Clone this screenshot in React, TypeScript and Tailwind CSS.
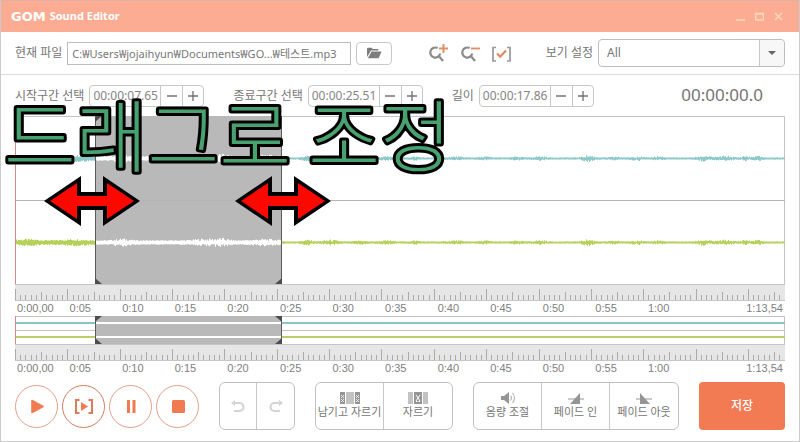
import { useState } from 'react'
import type { ReactNode } from 'react'
import clsx from 'clsx'

const DURATION = 73.54
const WIDTH = 770
const SEL_START = 80
const SEL_END = 267

const MARKS = [
  { label: '0:00,00', span: 5 },
  { label: '0:05', span: 5 },
  { label: '0:10', span: 5 },
  { label: '0:15', span: 5 },
  { label: '0:20', span: 5 },
  { label: '0:25', span: 5 },
  { label: '0:30', span: 5 },
  { label: '0:35', span: 5 },
  { label: '0:40', span: 5 },
  { label: '0:45', span: 5 },
  { label: '0:50', span: 5 },
  { label: '0:55', span: 5 },
  { label: '1:00', span: 13.54 },
]

// loud passages of the track: [center, spread, level]
const BURSTS = [
  [12, 14, 1.2],
  [60, 14, 1.2],
  [107, 9, 1.6],
  [190, 14, 1.4],
  [206, 8, 1.8],
  [250, 14, 1.2],
  [292, 6, 1.6],
  [315, 8, 1.6],
  [345, 6, 1],
  [372, 8, 1],
  [400, 5, 1],
  [440, 8, 1],
  [470, 6, 1],
  [502, 5, 1],
  [525, 7, 1.2],
  [573, 7, 2],
  [600, 6, 0.8],
  [622, 5, 1.6],
  [643, 5, 1.4],
  [689, 7, 1.8],
  [710, 8, 1.5],
  [730, 4, 1.8],
  [742, 5, 1.5],
]

function noise(n: number) {
  const v = Math.sin(n * 12.9898) * 43758.5453
  return v - Math.floor(v)
}

function level(x: number) {
  const base = x < SEL_END ? 2 : 1
  const burst = BURSTS.reduce(
    (sum, [c, w, a]) => sum + a * Math.exp(-(((x - c) / w) ** 2)),
    0
  )
  return base * 0.8 + (base * 0.3 + burst) * noise(x) * 1.2
}

function wavePath(from: number, to: number, y: number) {
  let d = ''
  for (let x = from; x < to; x++) {
    d += `M${x + 0.5} ${(y - level(x)).toFixed(1)}V${(y + level(x + 0.3)).toFixed(1)}`
  }
  return d
}

function Selection({ height }: { height: number }) {
  return (
    <>
      <path
        d={`M${SEL_START + 0.5} 0V${height}M${SEL_END - 0.5} 0V${height}`}
        stroke="#5a5a5a"
      />
      <path
        d={`M${SEL_START} 0h7l-7 6zM${SEL_END} 0h-7l7 6zM${SEL_START} ${height}h7l-7 -6zM${SEL_END} ${height}h-7l7 -6z`}
        fill="#4d4d4d"
      />
    </>
  )
}

function Waveform() {
  return (
    <svg
      viewBox="0 0 770 168"
      preserveAspectRatio="none"
      className="block h-[168px] w-full"
    >
      <path d="M0 .5H769.5V168" fill="none" stroke="#c4c4c4" />
      <rect
        x={SEL_START}
        width={SEL_END - SEL_START}
        height="168"
        fill="#b9b9b9"
      />
      <path d="M0 84.5H770" stroke="#b4b4b4" />
      {[
        { y: 42.5, color: '#8cc9c8' },
        { y: 126.5, color: '#b5d159' },
      ].map(({ y, color }) => (
        <g key={y}>
          <path d={wavePath(0, SEL_START, y)} stroke={color} />
          <path d={wavePath(SEL_START, SEL_END, y)} stroke="#fff" />
          <path d={wavePath(SEL_END, WIDTH, y)} stroke={color} />
        </g>
      ))}
      <Selection height={168} />
      <path d="M.5 0V168" stroke="#d88787" />
    </svg>
  )
}

function Overview() {
  return (
    <svg
      viewBox="0 0 770 28"
      preserveAspectRatio="none"
      className="block h-7 w-full"
    >
      <path d="M0 .5H769.5V28M0 14.5H770" fill="none" stroke="#c4c4c4" />
      <path d="M0 7H770" stroke="#8cc3c8" strokeWidth="2" />
      <path d="M0 21H770" stroke="#bccd6c" strokeWidth="2" />
      <rect
        x={SEL_START}
        width={SEL_END - SEL_START}
        height="28"
        fill="#b9b9b9"
      />
      <path
        d={`M${SEL_START} 7H${SEL_END}M${SEL_START} 21H${SEL_END}`}
        stroke="#fff"
        strokeWidth="2"
      />
      <Selection height={28} />
      <path d="M.5 0V28" stroke="#d88787" />
    </svg>
  )
}

function Ruler() {
  let ticks = ''
  for (let i = 0; i * 0.5 <= DURATION; i++) {
    const x = Math.round((i * 0.5 * WIDTH) / DURATION) + 0.5
    const size = i % 10 === 0 ? 11 : i % 5 === 0 ? 8 : 5
    ticks += `M${x} 16v-${size}`
  }
  return (
    <div>
      <svg
        viewBox="0 0 770 17"
        preserveAspectRatio="none"
        className="block h-[17px] w-full"
      >
        <rect width="770" height="17" fill="#e6e6e6" />
        <path d="M0 .5H770M0 16.5H770" stroke="#c6c6c6" />
        <path d={ticks} stroke="#ababab" />
      </svg>
      <div className="flex font-['Liberation_Sans',sans-serif] text-[11px] leading-[15px] text-[#808080]">
        {MARKS.map(({ label, span }, i) => (
          <span
            key={label}
            className="flex min-w-0 basis-0 justify-between pl-0.5 whitespace-nowrap"
            style={{ flexGrow: span }}
          >
            {label}
            {i === MARKS.length - 1 && <span className="pr-0.5">1:13,54</span>}
          </span>
        ))}
      </div>
    </div>
  )
}

function TimeField({
  id,
  label,
  value,
}: {
  id: string
  label: string
  value: string
}) {
  return (
    <div className="flex items-center gap-[5px]">
      <label htmlFor={id} className="whitespace-nowrap">
        {label}
      </label>
      <div className="flex h-[22px] overflow-hidden rounded border border-[#c8c8c8]">
        <input
          id={id}
          defaultValue={value}
          className="w-[70px] pl-[3px] text-xs text-[#858585] outline-none"
        />
        <button
          aria-label={`${label} -`}
          className="flex w-[22px] items-center justify-center border-l border-[#c8c8c8]"
        >
          <Sign />
        </button>
        <button
          aria-label={`${label} +`}
          className="flex w-[21px] items-center justify-center border-l border-[#c8c8c8]"
        >
          <Sign plus />
        </button>
      </div>
    </div>
  )
}

function Sign({ plus }: { plus?: boolean }) {
  return (
    <svg viewBox="0 0 10 10" className="size-[10px]">
      <path
        d={plus ? 'M0 5H10M5 0V10' : 'M0 5H10'}
        stroke="#757575"
        strokeWidth="1.4"
      />
    </svg>
  )
}

function Magnifier({ plus }: { plus?: boolean }) {
  return (
    <svg viewBox="0 0 20 20" fill="none" className="size-5">
      <path
        d="M9.6 5.1A5 5 0 1 0 12.2 10.5M10.8 13L15 18"
        stroke="#8c8c8c"
        strokeWidth="2.2"
      />
      <path
        d={plus ? 'M11 5.5H20M15.5 1V10' : 'M11 5.5H20'}
        stroke="#e08d68"
        strokeWidth="1.9"
      />
    </svg>
  )
}

function RoundButton({
  label,
  strong,
  children,
}: {
  label: string
  strong?: boolean
  children: ReactNode
}) {
  return (
    <button
      aria-label={label}
      className={clsx(
        'flex size-[43px] shrink-0 items-center justify-center rounded-full border',
        strong ? 'border-[#cf7c5e]' : 'border-[#e3a08a]'
      )}
    >
      <svg viewBox="0 0 20 20" className="size-5" fill="#f07b53">
        {children}
      </svg>
    </button>
  )
}

function ToolGroup({ children }: { children: ReactNode }) {
  return (
    <div className="flex h-12 divide-x divide-[#c8c8c8] overflow-hidden rounded-md border border-[#c0c0c0]">
      {children}
    </div>
  )
}

function ToolButton({
  label,
  children,
}: {
  label: string
  children: ReactNode
}) {
  return (
    <button className="flex w-[68px] flex-col items-center justify-center text-[11px] leading-4 whitespace-nowrap">
      <svg viewBox="0 0 20 12" className="h-3 w-5" fill="#959595">
        {children}
      </svg>
      {label}
    </button>
  )
}

function DragArrow() {
  return (
    <svg viewBox="0 0 96 50" className="h-[50px] w-24">
      <path d="M0 25L37 0V16H59V0L96 25L59 50V34H37V50Z" fill="#000" />
      <path d="M6 25L33 7V20H63V7L90 25L63 43V30H33V43Z" fill="#fb0800" />
    </svg>
  )
}

export default function App() {
  const [view, setView] = useState('All')

  return (
    <div className="border-x border-b border-[#cbcbcb] bg-white font-['Noto_Sans','Noto_Sans_CJK_KR',sans-serif] text-xs text-[#757575]">
      <header className="flex h-8 items-center justify-between border-t border-[#dfb0a3] bg-[#fdac94] pr-4 pl-2.5 text-white">
        <h1 className="flex items-center gap-1 text-[11px] font-bold">
          <span className="font-['DejaVu_Sans',sans-serif] text-[13px]">GOM</span>
          <span>Sound Editor</span>
        </h1>
        <div className="flex gap-2.5">
          <button aria-label="최소화">
            <svg viewBox="0 0 9 9" className="size-[9px]">
              <path d="M0 8H9" stroke="#fbd9b8" strokeWidth="1.6" />
            </svg>
          </button>
          <button aria-label="최대화">
            <svg viewBox="0 0 9 9" className="size-[9px]" fill="none">
              <path d="M.7 1.5H8.3V8H.7ZM0 2H9" stroke="#fbd9b8" strokeWidth="1.4" />
            </svg>
          </button>
          <button aria-label="닫기">
            <svg viewBox="0 0 9 9" className="size-[9px]">
              <path d="M1 1L8 8M8 1L1 8" stroke="#fbd9b8" strokeWidth="1.5" />
            </svg>
          </button>
        </div>
      </header>

      <div className="flex h-[43px] items-center border-b border-[#dcdcdc] px-3.5">
        <label htmlFor="file" className="whitespace-nowrap">
          현재 파일
        </label>
        <input
          id="file"
          readOnly
          value="C:₩Users₩jojaihyun₩Documents₩GO...₩테스트.mp3"
          className="ml-[5px] h-[23px] w-[284px] border border-[#bdbdbd] px-1 text-[11px] text-[#777] outline-none"
        />
        <button
          aria-label="열기"
          className="ml-[5px] flex h-[23px] w-9 items-center justify-center rounded border border-[#c8c8c8]"
        >
          <svg viewBox="0 0 15 12" className="h-3 w-[15px]" fill="#7d7d7d">
            <path d="M0 10V1.5L.8.7H4.5L5.8 2H11.3V3.6H4L1.8 7.2Z" />
            <path d="M4.6 4.5H14.6L11.6 11.3H.8Z" />
          </svg>
        </button>
        <div className="ml-9 flex items-center gap-3">
          <button aria-label="확대">
            <Magnifier plus />
          </button>
          <button aria-label="축소">
            <Magnifier />
          </button>
          <button aria-label="전체 보기">
            <svg viewBox="0 0 20 20" fill="none" className="size-5">
              <path
                d="M4 4.5H1V18H4M15 4.5H18V18H15"
                stroke="#999"
                strokeWidth="1.7"
              />
              <path d="M5 10.5L8.2 13.8L14 7.5" stroke="#e0865c" strokeWidth="2" />
            </svg>
          </button>
        </div>
        <label htmlFor="view" className="mr-[5px] ml-auto whitespace-nowrap">
          보기 설정
        </label>
        <div className="relative">
          <select
            id="view"
            value={view}
            onChange={(e) => setView(e.target.value)}
            className="block h-7 w-[187px] appearance-none rounded-sm border border-[#bdbdbd] pl-2 text-xs text-[#777] outline-none"
          >
            <option>All</option>
          </select>
          <span className="pointer-events-none absolute inset-y-px right-px flex w-[25px] items-center justify-center rounded-r-sm border-l border-[#c8c8c8] bg-[#f7f7f7]">
            <svg viewBox="0 0 8 4" className="h-1 w-2">
              <path d="M0 0H8L4 4Z" fill="#666" />
            </svg>
          </span>
        </div>
      </div>

      <div className="flex h-[41px] items-center gap-[29px] px-3.5">
        <TimeField id="start" label="시작구간 선택" value="00:00:07.65" />
        <TimeField id="end" label="종료구간 선택" value="00:00:25.51" />
        <TimeField id="length" label="길이" value="00:00:17.86" />
        <output className="mr-[22px] ml-auto text-[17px]">00:00:00.0</output>
      </div>

      <main className="relative px-3.5">
        <Waveform />
        <Ruler />
        <Overview />
        <Ruler />
        <svg
          viewBox="0 0 480 130"
          className="pointer-events-none absolute -top-11 left-0 h-[130px] w-[480px] overflow-visible"
        >
          <text
            x="3"
            y="94"
            fontSize="78"
            fill="#48a270"
            stroke="#000"
            strokeWidth="6"
            strokeLinejoin="round"
            paintOrder="stroke"
            className="font-['Noto_Sans_CJK_KR',sans-serif] font-light"
          >
            드래그로 조정
          </text>
        </svg>
        <div className="pointer-events-none absolute top-[60px] left-[43px] flex gap-[95px]">
          <DragArrow />
          <DragArrow />
        </div>
      </main>

      <footer className="flex items-center gap-5 px-3.5 pt-1.5 pb-[11px]">
        <div className="flex gap-1">
          <RoundButton label="재생">
            <path
              d="M5 4.5L16 10.5L5 16.5Z"
              stroke="#f07b53"
              strokeWidth="1.6"
              strokeLinejoin="round"
            />
          </RoundButton>
          <RoundButton label="구간 재생" strong>
            <path
              d="M5.5 4H2V17H5.5M14.5 4H18V17H14.5"
              fill="none"
              stroke="#dd7c58"
              strokeWidth="2"
            />
            <path d="M7 6L14 10.5L7 15Z" />
          </RoundButton>
          <RoundButton label="일시 정지">
            <path d="M6 4H9V17H6ZM11.5 4H14.5V17H11.5Z" />
          </RoundButton>
          <RoundButton label="정지">
            <rect x="4" y="4" width="13" height="13" rx="1.5" />
          </RoundButton>
        </div>

        <ToolGroup>
          <button aria-label="실행 취소" className="flex w-[37px] items-center justify-center">
            <svg viewBox="0 0 14 14" className="size-[14px]" fill="none">
              <path d="M3 4H8.5A4 4 0 0 1 8.5 12H3" stroke="#d4d4d4" strokeWidth="2.2" />
              <path d="M0 4L4 1V7Z" fill="#d4d4d4" />
            </svg>
          </button>
          <button aria-label="다시 실행" className="flex w-[37px] items-center justify-center">
            <svg viewBox="0 0 14 14" className="size-[14px]" fill="none">
              <path d="M11 4H5.5A4 4 0 0 0 5.5 12H11" stroke="#d4d4d4" strokeWidth="2.2" />
              <path d="M14 4L10 1V7Z" fill="#d4d4d4" />
            </svg>
          </button>
        </ToolGroup>

        <ToolGroup>
          <ToolButton label="남기고 자르기">
            <path d="M0 0H5V12H0ZM15 0H20V12H15Z" />
            <path d="M6 0H14V12H6Z" fill="#c2c2c2" />
            <path
              d="M1 3L4 6M4 3L1 6M1 7L4 10M4 7L1 10M16 3L19 6M19 3L16 6M16 7L19 10M19 7L16 10"
              stroke="#fff"
              strokeWidth=".8"
            />
          </ToolButton>
          <ToolButton label="자르기">
            <path d="M0 0H5V12H0ZM15 0H20V12H15Z" fill="#c2c2c2" />
            <path d="M6 0H14V12H6Z" />
            <path d="M8 3L12 9M12 3L8 9M8 9.5H9.5M10.5 9.5H12" stroke="#fff" strokeWidth="1" />
          </ToolButton>
        </ToolGroup>

        <ToolGroup>
          <ToolButton label="음량 조절">
            <path d="M3 4H6L11 0V12L6 8H3Z" />
            <path
              d="M12.5 3.5Q14.5 6 12.5 8.5M14.5 1Q18.5 6 14.5 11"
              fill="none"
              stroke="#b5b5b5"
              strokeWidth="1.1"
            />
          </ToolButton>
          <ToolButton label="페이드 인">
            <path d="M4 12L14 1V12Z" />
            <path d="M2 7H18" stroke="#959595" strokeWidth="1.2" />
          </ToolButton>
          <ToolButton label="페이드 아웃">
            <path d="M16 12L6 1V12Z" />
            <path d="M2 7H18" stroke="#959595" strokeWidth="1.2" />
          </ToolButton>
        </ToolGroup>

        <button className="h-12 flex-1 rounded bg-[#f37b53] text-xs font-medium text-white">
          저장
        </button>
      </footer>
    </div>
  )
}
